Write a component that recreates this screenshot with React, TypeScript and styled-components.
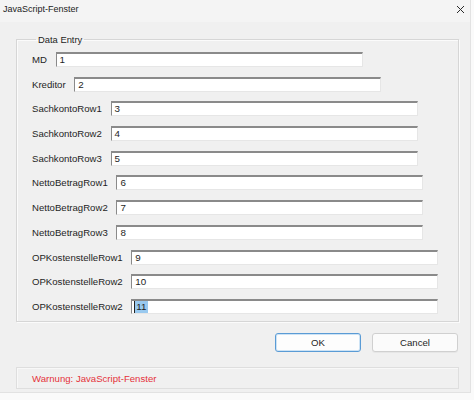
import React from "react";
import styled, { createGlobalStyle } from "styled-components";

const GlobalStyle = createGlobalStyle`
  html, body {
    margin: 0;
    padding: 0;
    background: #fafafa;
  }
  * {
    box-sizing: border-box;
  }
`;

const StyledWindow = styled.div`
  width: 471px;
  height: 393px;
  background: #f0f0f0;
  border-right: 1px solid #e2e2e2;
  border-bottom: 1px solid #e2e2e2;
  font-family: "Liberation Sans", Arial, sans-serif;
  font-size: 9.6px;
  color: #1e1e1e;
  display: flex;
  flex-direction: column;
`;

const StyledTitleBar = styled.div`
  height: 22px;
  background: #f4f4f4;
  display: flex;
  align-items: center;
  justify-content: space-between;
  padding: 0 5px 4px 3px;
  font-size: 9px;
  color: #222;
`;

const StyledBody = styled.div`
  display: flex;
  flex-direction: column;
  padding: 0 11px 0 16px;
`;

const StyledFieldSet = styled.fieldset`
  margin: 12px 0 0;
  padding: 7px 0 6px 15px;
  min-width: 0;
  height: 288px;
  border: 1px solid #d6d6d6;
  box-shadow: inset 1px 1px 0 #fbfbfb, 1px 1px 0 #fbfbfb;

  legend {
    margin-left: 4px;
    padding: 0 2px;
    font-size: 9.4px;
    color: #1e1e1e;
  }
`;

const StyledRows = styled.div`
  display: flex;
  flex-direction: column;
  gap: 9.7px;
`;

const StyledRow = styled.div`
  display: flex;
  align-items: center;
  gap: 8.7px;
  height: 15px;
`;

const StyledLabel = styled.span`
  white-space: nowrap;
`;

const StyledField = styled.div`
  width: 307px;
  height: 15px;
  flex-shrink: 0;
  background: #fff;
  border-top: 2px solid #8a8a8a;
  border-left: 1px solid #8a8a8a;
  border-right: 1px solid #e6e6e6;
  border-bottom: 1px solid #e6e6e6;
  display: flex;
  align-items: center;
  padding-left: 2px;
  font-size: 9.8px;
  line-height: 12px;
`;

const StyledSelection = styled.span<{ $selected?: boolean }>`
  background: ${(p) => (p.$selected ? "#99c9ef" : "transparent")};
  padding: 0 1px;
  border-left: ${(p) => (p.$selected ? "1px solid #222" : "none")};
`;

const StyledButtons = styled.div`
  display: flex;
  justify-content: flex-end;
  gap: 11px;
  margin-top: 11px;
  padding-right: 1px;
`;

const StyledButton = styled.button<{ $primary?: boolean }>`
  width: 86px;
  height: 19px;
  padding: 0;
  border-radius: 3px;
  border: 1px solid ${(p) => (p.$primary ? "#5a9bd5" : "#d0d0d0")};
  background: ${(p) => (p.$primary ? "#fdfdfd" : "#fbfbfb")};
  box-shadow: ${(p) =>
    p.$primary ? "inset 0 0 0 1px #cde3f5" : "0 1px 0 #e6e6e6"};
  font-family: "Liberation Sans", Arial, sans-serif;
  font-size: 9.6px;
  color: #1e1e1e;
`;

const StyledWarning = styled.div`
  margin-top: 15px;
  height: 22px;
  border: 1px solid #dedede;
  box-shadow: inset 1px 1px 0 #f8f8f8;
  display: flex;
  align-items: center;
  padding-left: 15px;
  color: #e5323b;
  font-size: 9.6px;
`;

const fields = [
  { label: "MD", value: "1" },
  { label: "Kreditor", value: "2" },
  { label: "SachkontoRow1", value: "3" },
  { label: "SachkontoRow2", value: "4" },
  { label: "SachkontoRow3", value: "5" },
  { label: "NettoBetragRow1", value: "6" },
  { label: "NettoBetragRow2", value: "7" },
  { label: "NettoBetragRow3", value: "8" },
  { label: "OPKostenstelleRow1", value: "9" },
  { label: "OPKostenstelleRow2", value: "10" },
  { label: "OPKostenstelleRow2", value: "11", selected: true },
];

const CloseIcon = () => (
  <svg width="9" height="9" viewBox="0 0 9 9">
    <path d="M1 1 L8 8 M8 1 L1 8" stroke="#2b2b2b" strokeWidth="1" />
  </svg>
);

export default function App() {
  return (
    <>
      <GlobalStyle />
      <StyledWindow>
        <StyledTitleBar>
          <span>JavaScript-Fenster</span>
          <CloseIcon />
        </StyledTitleBar>
        <StyledBody>
          <StyledFieldSet>
            <legend>Data Entry</legend>
            <StyledRows>
              {fields.map((f, i) => (
                <StyledRow key={i}>
                  <StyledLabel>{f.label}</StyledLabel>
                  <StyledField>
                    <StyledSelection $selected={f.selected}>
                      {f.value}
                    </StyledSelection>
                  </StyledField>
                </StyledRow>
              ))}
            </StyledRows>
          </StyledFieldSet>
          <StyledButtons>
            <StyledButton $primary>OK</StyledButton>
            <StyledButton>Cancel</StyledButton>
          </StyledButtons>
          <StyledWarning>Warnung: JavaScript-Fenster</StyledWarning>
        </StyledBody>
      </StyledWindow>
    </>
  );
}
